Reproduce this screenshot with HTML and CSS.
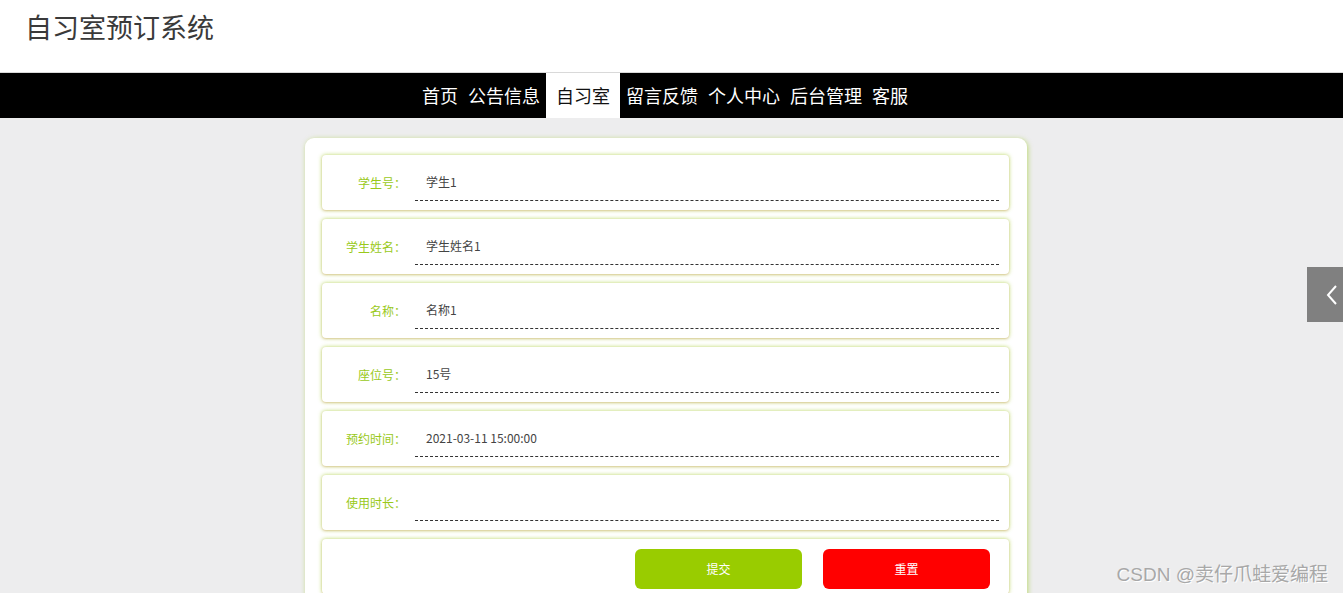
FILE: index.html
```html
<!DOCTYPE html>
<html lang="zh">
<head>
<meta charset="utf-8">
<title>自习室预订系统</title>
<link rel="stylesheet" href="styles.css">
</head>
<body>
<header class="top">
  <div class="title">自习室预订系统</div>
</header>
<nav class="nav">
  <div class="nav-inner">
    <a class="nav-item">首页</a>
    <a class="nav-item">公告信息</a>
    <a class="nav-item active">自习室</a>
    <a class="nav-item">留言反馈</a>
    <a class="nav-item">个人中心</a>
    <a class="nav-item">后台管理</a>
    <a class="nav-item">客服</a>
  </div>
</nav>
<main class="main">
  <div class="panel">
    <div class="row">
      <label class="lbl">学生号：</label>
      <div class="field">学生1</div>
    </div>
    <div class="row">
      <label class="lbl">学生姓名：</label>
      <div class="field">学生姓名1</div>
    </div>
    <div class="row">
      <label class="lbl">名称：</label>
      <div class="field">名称1</div>
    </div>
    <div class="row">
      <label class="lbl">座位号：</label>
      <div class="field">15号</div>
    </div>
    <div class="row">
      <label class="lbl">预约时间：</label>
      <div class="field">2021-03-11 15:00:00</div>
    </div>
    <div class="row">
      <label class="lbl">使用时长：</label>
      <div class="field"></div>
    </div>
    <div class="row btn-row">
      <button class="btn btn-submit">提交</button>
      <button class="btn btn-reset">重置</button>
    </div>
  </div>
</main>
<div class="side-tab">
  <svg width="14" height="22" viewBox="0 0 14 22"><polyline points="11,2 3,11 11,20" fill="none" stroke="#fff" stroke-width="2"/></svg>
</div>
<div class="watermark">CSDN @卖仔爪蛙爱编程</div>
</body>
</html>
```
FILE: styles.css
```css
html, body {
  margin: 0;
  padding: 0;
  overflow: hidden;
  height: 100%;
}
body {
  background: #ededee;
  font-family: "Noto Sans CJK SC", "Noto Sans", sans-serif;
  position: relative;
}
.top {
  background: #fff;
  height: 73px;
  padding: 8px 0 0 25px;
  box-sizing: border-box;
  border-bottom: 1px solid #d9d9d9;
}
.title {
  font-size: 27px;
  line-height: 38px;
  color: #3a3a3a;
}
.nav {
  background: #000;
  height: 45px;
  padding-right: 13px;
}
.nav-inner {
  display: flex;
  justify-content: center;
  height: 45px;
}
.nav-item {
  color: #fff;
  font-size: 18px;
  line-height: 45px;
  padding: 0 5px;
}
.nav-item.active {
  background: #fff;
  color: #111;
  padding: 0 10px;
  margin: 0 1px;
}
.main {
  display: flex;
  justify-content: center;
  padding: 20px 11px 0 0;
}
.panel {
  width: 722px;
  box-sizing: border-box;
  background: #fff;
  border-radius: 9px;
  padding: 17px 18px 20px 17px;
  box-shadow: 1px 1px 5px rgba(160, 205, 40, 0.6);
  display: flex;
  flex-direction: column;
  gap: 9px;
}
.row {
  height: 55px;
  box-sizing: border-box;
  background: #fff;
  border-radius: 4px;
  display: flex;
  align-items: center;
  padding: 9px 10px 9px 0;
  box-shadow: 0 0 4px rgba(160, 205, 40, 0.7), 0 1px 2px rgba(230, 120, 120, 0.35);
}
.lbl {
  width: 84px;
  text-align: right;
  font-size: 12px;
  color: #99c91a;
  margin-right: 9px;
  flex: none;
}
.field {
  flex: 1;
  height: 37px;
  box-sizing: border-box;
  border-bottom: 1px dashed #333;
  padding-left: 11px;
  font-size: 12px;
  line-height: 36px;
  color: #444;
}
.btn-row {
  justify-content: flex-end;
  padding: 0 19px 0 0;
  gap: 21px;
  height: 55px;
}
.btn {
  width: 167px;
  height: 40px;
  border: none;
  border-radius: 6px;
  color: #fff;
  font-size: 12px;
  font-family: "Noto Sans CJK SC", "Noto Sans", sans-serif;
  margin-top: 4px;
}
.btn-submit {
  background: #99cc00;
}
.btn-reset {
  background: #ff0000;
}
.side-tab {
  position: absolute;
  right: 0;
  top: 267px;
  width: 36px;
  height: 55px;
  background: #808080;
  display: flex;
  align-items: center;
  justify-content: flex-end;
  padding-right: 4px;
  box-sizing: border-box;
}
.watermark {
  position: absolute;
  right: 15px;
  top: 559px;
  font-family: "Liberation Sans", "Noto Sans CJK SC", sans-serif;
  font-size: 19px;
  color: #a8a8a8;
  text-shadow: 1px 1px 0 #fff;
}
```
